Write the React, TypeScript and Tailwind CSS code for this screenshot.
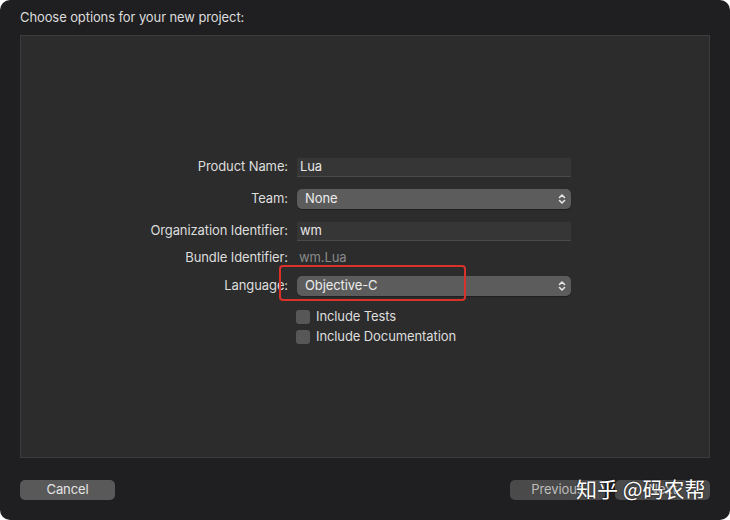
import React from "react";

function Field({ value }: { value: string }) {
  return (
    <div className="flex h-[20px] items-center border-b border-b-[#4a4a4a] border-t border-t-[#2e2e2e] bg-[#363636] px-[3px] text-[13px] text-[#e6e6e6]">
      {value}
    </div>
  );
}

function Popup({ value }: { value: string }) {
  return (
    <div className="flex h-[20px] items-center justify-between rounded-[5px] bg-[#5c5c5c] pl-[8px] pr-[5px] text-[13px] text-[#ececec] shadow-[0_1px_1px_rgba(0,0,0,0.3)]">
      <span>{value}</span>
      <svg width="8" height="12" viewBox="0 0 8 12" fill="none" stroke="#e6e6e6" strokeWidth="1.6" strokeLinecap="round" strokeLinejoin="round">
        <path d="M1.5 4.5 4 2l2.5 2.5M1.5 7.5 4 10l2.5-2.5" />
      </svg>
    </div>
  );
}

function Label({ children }: { children: React.ReactNode }) {
  return <div className="text-right text-[13px] text-[#dedede]">{children}</div>;
}

function Check({ label }: { label: string }) {
  return (
    <div className="-ml-[1px] flex h-[16px] items-center gap-[6px]">
      <div className="h-[14px] w-[14px] rounded-[3px] bg-[#575757]" />
      <span className="text-[13px] text-[#dedede]">{label}</span>
    </div>
  );
}

export default function App() {
  return (
    <div className="h-[520px] w-[730px] bg-white font-['Inter','Noto_Sans',sans-serif] tracking-[-0.1px]">
      <div className="relative flex h-full w-full flex-col rounded-[10px] bg-[#1f1f21] px-[20px]">
        <div className="flex h-[35px] items-center pt-[1px] text-[13px] text-[#dcdcdc]">
          Choose options for your new project:
        </div>
        <div className="h-[423px] border border-[#3b3b3b] bg-[#2c2c2c] pt-[121px]">
          <div className="grid grid-cols-[267px_274px] items-center gap-x-[9px]">
            <Label>Product Name:</Label>
            <Field value="Lua" />
            <div className="col-span-2 h-[12px]" />
            <Label>Team:</Label>
            <Popup value="None" />
            <div className="col-span-2 h-[12px]" />
            <Label>Organization Identifier:</Label>
            <Field value="wm" />
            <div className="col-span-2 h-[7px]" />
            <Label>Bundle Identifier:</Label>
            <div className="flex h-[20px] items-center px-[2px] text-[13px] text-[#8a8a8a]">wm.Lua</div>
            <div className="col-span-2 h-[8px]" />
            <Label>Language:</Label>
            <Popup value="Objective-C" />
            <div className="col-span-2 h-[13px]" />
            <div />
            <Check label="Include Tests" />
            <div className="col-span-2 h-[4px]" />
            <div />
            <Check label="Include Documentation" />
          </div>
        </div>
        <div className="flex flex-1 items-center justify-between pt-[1px]">
          <button className="h-[20px] w-[95px] rounded-[5px] bg-[#595959] text-[13px] text-[#e4e4e4]">Cancel</button>
          <div className="flex gap-[10px]">
            <button className="h-[20px] w-[95px] rounded-[5px] bg-[#4a4a4a] text-[13px] text-[#bdbdbd]">Previous</button>
            <button className="h-[20px] w-[95px] rounded-[5px] bg-[#4a4a4a] text-[13px] text-[#bdbdbd]">Next</button>
          </div>
        </div>
        <div className="absolute left-[279px] top-[265px] h-[36px] w-[187px] rounded-[4px] border-2 border-[#d9322b]" />
        <div className="absolute left-[576px] top-[474px] font-['Noto_Sans_CJK_SC',sans-serif] text-[21px] leading-[28px] tracking-normal text-white [text-shadow:0_0_2px_rgba(0,0,0,0.8)]">
          知乎 @码农帮
        </div>
      </div>
    </div>
  );
}
